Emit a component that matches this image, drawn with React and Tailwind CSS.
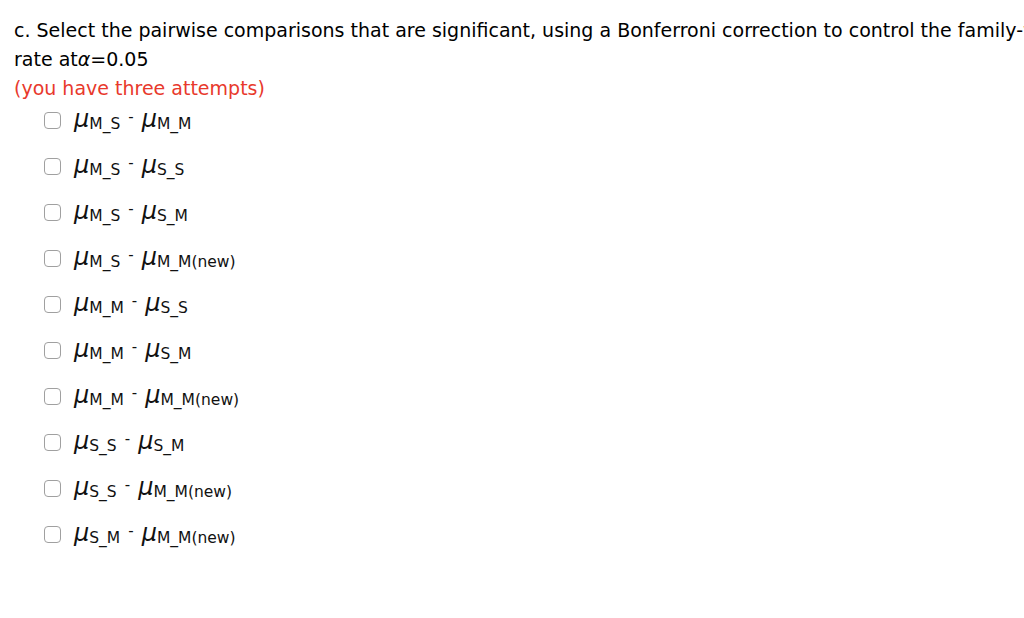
const rows = [
  ['M_S', 'M_M'],
  ['M_S', 'S_S'],
  ['M_S', 'S_M'],
  ['M_S', 'M_M(new)'],
  ['M_M', 'S_S'],
  ['M_M', 'S_M'],
  ['M_M', 'M_M(new)'],
  ['S_S', 'S_M'],
  ['S_S', 'M_M(new)'],
  ['S_M', 'M_M(new)'],
]

function Mu({ sub }) {
  return (
    <span className="inline-flex items-baseline">
      <span className="italic text-[24px] leading-none">μ</span>
      <span className="text-[15.5px] leading-none translate-y-[2px]">{sub}</span>
    </span>
  )
}

export default function App() {
  return (
    <div className="w-[1024px] h-[618px] overflow-hidden bg-white text-black" style={{ fontFamily: '"DejaVu Sans", Verdana, sans-serif' }}>
      <div className="pl-[14px] pt-[16px] w-[1200px]">
        <p className="text-[19px] leading-[29px] whitespace-nowrap">
          c. Select the pairwise comparisons that are significant, using a Bonferroni correction to control the family-wise error
          <br />
          rate at<span className="italic">α</span>=0.05
        </p>
        <p className="text-[19px] leading-[29px] text-[#e8392c]">(you have three attempts)</p>
        <ul className="pl-[30px] -mt-[6px]">
          {rows.map(([a, b], i) => (
            <li key={i} className="flex items-center h-[46px]">
              <span className="w-[17px] h-[17px] rounded-[4px] border border-[#a0a0a0] bg-white shrink-0" />
              <span className="ml-[13px] flex items-baseline text-[#111]">
                <Mu sub={a} />
                <span className="mx-[8px] text-[15px] -translate-y-[5px]">-</span>
                <Mu sub={b} />
              </span>
            </li>
          ))}
        </ul>
      </div>
    </div>
  )
}
